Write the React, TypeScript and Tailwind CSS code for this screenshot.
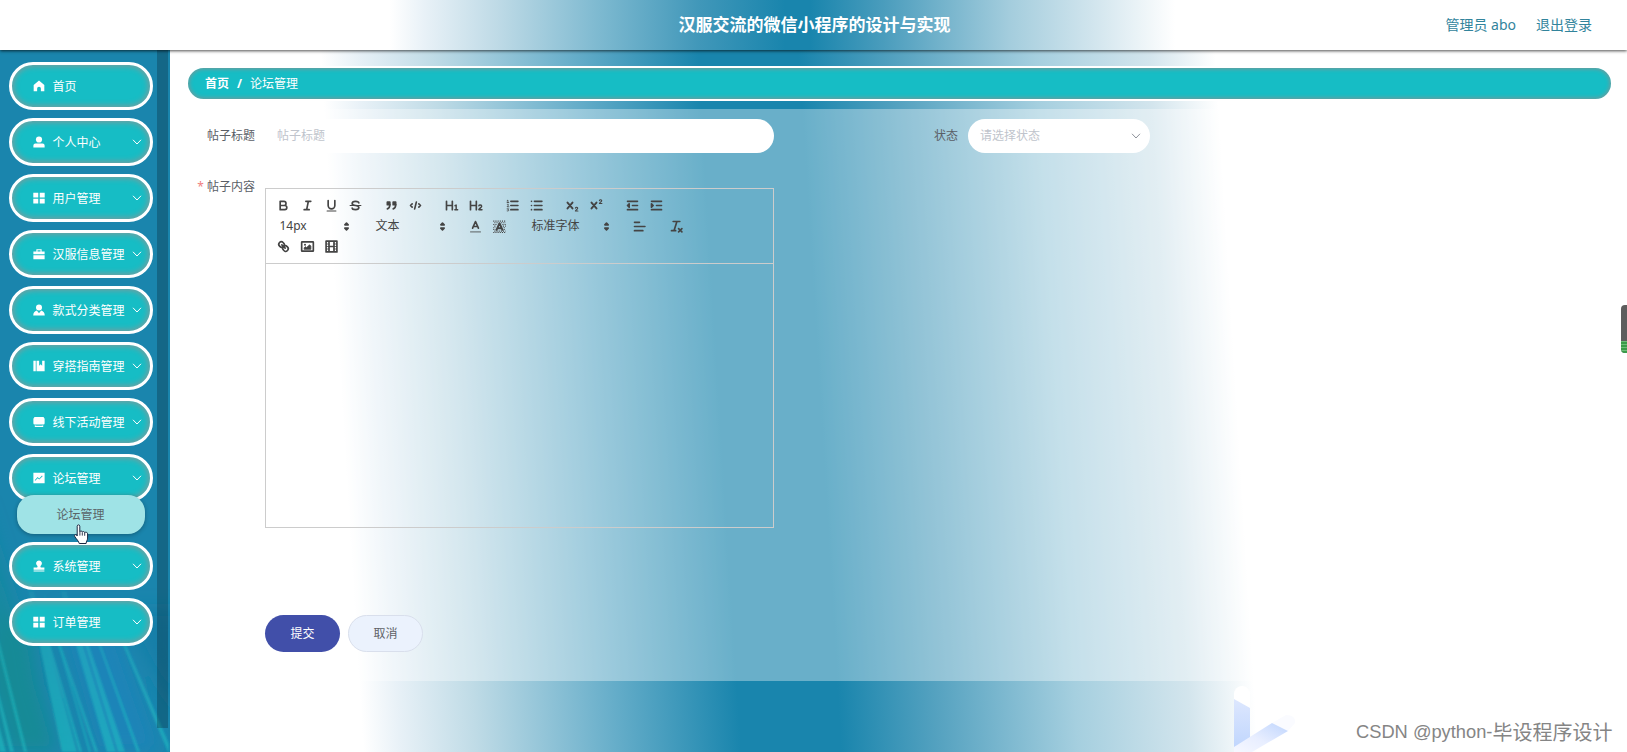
import type { ReactNode } from "react";
import clsx from "clsx";

type MenuItem = {
  label: string;
  icon: ReactNode;
  leaf?: boolean;
  children?: string[];
};

const menu: MenuItem[] = [
  {
    label: "首页",
    leaf: true,
    icon: <path d="M8 .8.9 6.800v8.200h4.600v-3.600a2.500 2.500 0 0 1 5 0v3.600h4.600V6.800z" />,
  },
  {
    label: "个人中心",
    icon: (
      <>
        <circle cx="8" cy="4.6" r="4.1" />
        <path d="M.5 15.2v-2.400a2.800 2.800 0 0 1 2.800-2.800h9.400a2.800 2.800 0 0 1 2.800 2.800v2.400z" />
      </>
    ),
  },
  { label: "用户管理", icon: <path d="M.4 1h6.6v6.2H.4zM9 1h6.6v6.2H9zM.4 9H7v6.200H.4zM9 9h6.600v6.200H9z" /> },
  {
    label: "汉服信息管理",
    icon: <path d="M4.5 1.500h7V4.500h4v3.700H.5V4.500h4zM6 2.900v1.600h4V2.900zM.5 9.800h15V15H.5z" fillRule="evenodd" />,
  },
  {
    label: "款式分类管理",
    icon: (
      <>
        <circle cx="8" cy="4.6" r="4" />
        <path d="M.3 15.3c.2-3.500 1.600-5.600 4.800-6.500L8 12.200l2.900-3.400c3.200.9 4.600 3 4.800 6.500z" />
      </>
    ),
  },
  { label: "穿搭指南管理", icon: <path d="M.5 1h3.200v14H.5zM4.700 1h3.500v6.500l2-1.700 2 1.700V1h3.300v14H4.700z" /> },
  {
    label: "线下活动管理",
    icon: <path d="M2 1.200h12l1.500 2.600v5.800a1.600 1.600 0 0 1-1.600 1.600H2.100A1.600 1.600 0 0 1 .5 9.600V3.800zM2.400 12.400c2 1 9.200 1 11.200 0v2.400H2.400z" />,
  },
  {
    label: "论坛管理",
    icon: <path d="M.5 1h15v14H.5zM3 11.600l3.200-3.400 2.200 1.900 4.400-4.600-.8-.8-3.700 3.900-2.200-1.900L2.300 11z" fillRule="evenodd" />,
    children: ["论坛管理"],
  },
  {
    label: "系统管理",
    icon: <path d="M8 .6a3.900 3.900 0 0 1 2.600 6.800c-.9 1-.9 2.400.2 2.600h4.400v3H.8v-3h4.400c1.100-.2 1.100-1.600.2-2.600A3.900 3.900 0 0 1 8 .6zM.8 14h14.400v1.400H.8z" />,
  },
  { label: "订单管理", icon: <path d="M.4 1h6.6v6.2H.4zM9 1h6.6v6.2H9zM.4 9H7v6.200H.4zM9 9h6.600v6.200H9z" /> },
];

function Chevron({ className }: { className?: string }) {
  return (
    <svg viewBox="0 0 10 10" className={clsx("size-[10px] fill-none stroke-current", className)}>
      <path d="M1 2.8 5 7l4-4.2" />
    </svg>
  );
}

function SidebarBackdrop() {
  return (
    <svg viewBox="0 0 170 702" preserveAspectRatio="none" className="absolute inset-0 size-full">
      <defs>
        <filter id="soft" x="-20%" y="-20%" width="140%" height="140%">
          <feGaussianBlur stdDeviation="1.1" />
        </filter>
        <filter id="wide" x="-40%" y="-40%" width="180%" height="180%">
          <feGaussianBlur stdDeviation="9" />
        </filter>
        <linearGradient id="fade" gradientUnits="userSpaceOnUse" x1="0" y1="520" x2="0" y2="702">
          <stop offset="0" stopColor="#22bfc4" stopOpacity="0" />
          <stop offset="0.4" stopColor="#22bfc4" stopOpacity="0.45" />
          <stop offset="1" stopColor="#22bfc4" stopOpacity="0.6" />
        </linearGradient>
      </defs>
      <rect width="170" height="702" fill="#1a85ad" />
      <g filter="url(#wide)">
        <path d="M-20 450 10 540 60 702H-20z" fill="#1489a0" />
        <path d="M0 560 30 580 50 702H20L-10 620z" fill="#128a96" />
        <path d="M60 560h50l50 142h-60z" fill="#1a84b8" />
        <path d="M120 560h60v110z" fill="#177fa8" />
      </g>
      <g filter="url(#soft)" fill="url(#fade)">
        <path d="M26 530h5l46 172H62z" />
        <path d="M38 560h2l42 142h-3z" />
        <path d="M60 540h6l50 162h-9z" />
        <path d="M74 560h3l48 142h-7z" />
        <path d="M50 570h2l46 132h-3z" />
        <path d="M44 545h1l46 157h-2z" />
        <path d="M86 560h2l52 142h-3z" />
        <path d="M108 560h3l58 134v10z" />
        <path d="M-4 590h3l28 112h-3z" />
        <path d="M-20 620h4l22 82H0z" />
        <path d="M-14 600h2l26 102h-4z" />
      </g>
    </svg>
  );
}

function Sidebar() {
  return (
    <aside className="relative flex w-[170px] shrink-0 overflow-hidden">
      <SidebarBackdrop />
      <nav className="relative flex w-[157px] flex-col gap-2 pt-3 pl-[8.5px]">
        {menu.map((item) => (
          <div key={item.label}>
            <div className="flex h-12 w-[144px] items-center rounded-full border-[3px] border-white bg-[#16bdc5] pr-[8px] pl-[21px] text-xs text-white shadow-[inset_0_0_6px_1px_#8a9696]">
              <svg viewBox="0 0 16 16" className="size-3 fill-current">
                {item.icon}
              </svg>
              <span className="mt-px ml-2 flex-1 whitespace-nowrap">{item.label}</span>
              {!item.leaf && <Chevron />}
            </div>
            {item.children?.map((child) => (
              <div
                key={child}
                className="relative -mt-[7px] ml-2 flex h-[39px] w-32 items-center justify-center rounded-[17px] bg-[#9fe3e6] text-xs text-[#5a6568] shadow-[0_1px_4px_rgba(0,0,0,0.3)]"
              >
                {child}
              </div>
            ))}
          </div>
        ))}
      </nav>
      <div className="relative h-[678px] w-[11px] bg-black/22" />
      {/* pointer resting on the open submenu entry */}
      <svg viewBox="0 0 16 21" className="absolute top-[474px] left-[73px] h-[21px] w-4">
        <path
          d="M4.200 2.200c0-1.800 2.600-1.800 2.600 0v5.600c.3-1.200 2.400-1.100 2.500.3.5-1 2.300-.7 2.400.6.6-.9 2.900-.5 2.900 1v4.400c0 2-1.300 3-1.500 5.400H6.200c-.3-2.200-2.800-4.300-4.400-6.900-1-1.700.8-2.700 1.900-1.400l.5.7z"
          fill="#fff"
          stroke="#1c2740"
          strokeWidth="1"
        />
        <path d="M6.900 8v3.600M9.300 8.400v3.200M11.700 9v2.800" stroke="#1c2740" strokeWidth=".9" />
      </svg>
    </aside>
  );
}

function Tool({ children }: { children: ReactNode }) {
  return (
    <span className="flex h-5 w-6 items-center justify-center">
      <svg viewBox="0 0 18 18" className="size-[15px] fill-none stroke-[#444] stroke-2 [stroke-linecap:round] [stroke-linejoin:round]">
        {children}
      </svg>
    </span>
  );
}

function Group({ children }: { children: ReactNode }) {
  return <span className="flex">{children}</span>;
}

function Picker({ label, className }: { label: string; className: string }) {
  return (
    <span className={clsx("flex h-5 items-center justify-between pr-[1.5px] pl-2 text-xs text-[#444]", className)}>
      {label}
      <svg viewBox="0 0 18 18" className="size-[15px] fill-[#444] stroke-[#444] stroke-2 [stroke-linejoin:round]">
        <path d="M7 11 9 13 11 11zM7 7 9 5 11 7z" />
      </svg>
    </span>
  );
}

const solid = "fill-[#444] stroke-none";

function Toolbar() {
  return (
    <div className="h-[76px] border border-[#ccc] py-[7px] pl-[5.5px]">
      <div className="-mt-px mb-px flex gap-[12.2px]">
        <Group>
          <Tool>
            <path d="M5 4h4.500a2.500 2.500 0 0 1 0 5H5zM5 9h5.500a2.500 2.500 0 0 1 0 5H5z" />
          </Tool>
          <Tool>
            <path d="M7 4h6M5 14h6M8 14l2-10" />
          </Tool>
          <Tool>
            <path d="M5 3v6a4 4 0 0 0 8 0V3" />
            <rect className={solid} x="3" y="15" width="12" height="1.200" rx=".5" />
          </Tool>
          <Tool>
            <path className="stroke-[1.2]" d="M15.500 9h-13" />
            <path d="M13 6c0-1.200-1.800-2-4-2S5 5 5 6.500 6.500 8.800 9 9s4 1 4 2.500S11.200 14 9 14s-4-.8-4-2" />
          </Tool>
        </Group>
        <Group>
          <Tool>
            <g className="fill-[#444]">
              <rect height="3" width="3" x="4" y="5" />
              <rect height="3" width="3" x="11" y="5" />
            </g>
            <path d="M7 8c0 4.031-3 5-3 5M14 8c0 4.031-3 5-3 5" />
          </Tool>
          <Tool>
            <path d="M5 7 3 9l2 2M13 7l2 2-2 2M10 5 8 13" />
          </Tool>
        </Group>
        <Group>
          <Tool>
            <path d="M3 4v10M10 4v10M3 9h7" />
            <path className="stroke-[1.7]" d="M13.200 9.200 14.600 8.400V14M13 14h3.400" />
          </Tool>
          <Tool>
            <path d="M3 4v10M10 4v10M3 9h7" />
            <path className="stroke-[1.7]" d="M13 9.400c.4-1.600 3.400-1.400 3.400.4 0 1.200-2.400 2.400-3.400 4.200h3.800" />
          </Tool>
        </Group>
        <Group>
          <Tool>
            <path d="M7 4h8.500M7 9h8.500M7 14h8.500" />
            <path className="stroke-1" d="M2.500 3.200 3.500 2.500v3M2.500 5.500h2M2.500 8c.6-1 2-.5 1.600.5L2.500 10.500h2.200M2.500 13h2l-1 1.200c1.600 0 1.300 1.800-.9 1.300" />
          </Tool>
          <Tool>
            <path d="M6.500 4h9M6.500 9h9M6.500 14h9M3 4h0M3 9h0M3 14h0" />
          </Tool>
        </Group>
        <Group>
          <Tool>
            <path className="stroke-[2.3]" d="m3 5.500 6 7M9 5.500l-6 7" />
            <path className="stroke-[1.3]" d="M12.500 12.200c.4-1.600 3-1.200 2.700.3-.2 1-2 1.800-2.700 3h3" />
          </Tool>
          <Tool>
            <path className="stroke-[2.3]" d="m3 5.500 6 7M9 5.500l-6 7" />
            <path className="stroke-[1.3]" d="M12.500 3.200c.4-1.600 3-1.200 2.700.3-.2 1-2 1.800-2.700 3h3" />
          </Tool>
        </Group>
        <Group>
          <Tool>
            <path d="M3 14h12M3 4h12M9 9h6" />
            <path className="fill-[#444]" d="M5 7v4L3 9z" />
          </Tool>
          <Tool>
            <path d="M3 14h12M3 4h12M9 9h6" />
            <path className="fill-[#444]" d="M3 7v4l2-2z" />
          </Tool>
        </Group>
      </div>
      <div className="flex gap-3">
        <Picker label="14px" className="w-[84px]" />
        <Picker label="文本" className="w-[84px]" />
        <Group>
          <Tool>
            <path className="stroke-1" d="M3 15.500h12" />
            <path d="M5.500 11 9 3l3.500 8M6.600 9h4.800" />
          </Tool>
          <Tool>
            <path
              className="stroke-[1.3] [stroke-dasharray:1.300_1.300] [stroke-linecap:butt]"
              d="M1.500 2.500h15M2.800 4.500h4.500M11 4.500h5.500M1.500 6.500h4.500M12.500 6.500h4M2.800 8.500h2.500M13 8.500h3.500M1.500 10.500h3M14 10.500h2.500M1.500 12.500h3M14 12.500h2.500M2.800 14.500h13.500M1.500 16.200h15"
            />
            <path className="stroke-[2.4]" d="M5.500 13 9 5l3.500 8M6.600 11h4.800" />
          </Tool>
        </Group>
        <Picker label="标准字体" className="w-[92px]" />
        <Group>
          <Tool>
            <path d="M3 9h12.500M3 14h10M3 4h6" />
          </Tool>
        </Group>
        <span className="flex pl-[1px]">
          <Tool>
            <path d="M5 3h8M6 14 9.500 3M3 14h5M11.500 11.500l4 4M15.500 11.500l-4 4" />
          </Tool>
        </span>
      </div>
      <Group>
        <Tool>
          <path d="m7 7 4 4" />
          <path d="M8.900 4.577a3.476 3.476 0 0 1 .36 4.679A3.476 3.476 0 0 1 4.577 8.900C3.185 7.500 2.035 6.400 4.217 4.217S7.500 3.185 8.900 4.577Z" />
          <path d="M13.423 9.100a3.476 3.476 0 0 0-4.679-.36 3.476 3.476 0 0 0 .36 4.679c1.392 1.392 2.500 2.542 4.679.36S14.815 10.500 13.423 9.100Z" />
        </Tool>
        <Tool>
          <rect x="2" y="3.500" width="14" height="11" rx=".5" />
          <circle className={solid} cx="6" cy="7" r="1.200" />
          <path className="fill-[#444] stroke-1" d="M5 12v-1.500l1.500-1.300L8 10.300 11.500 7 13 8.500V12z" />
        </Tool>
        <Tool>
          <path d="M2.500 2.500h13v13h-13zM6 3v12M12 3v12M6 9h6" />
          <path className="stroke-1" d="M3 6h3M3 9h3M3 12h3M12 6h3M12 9h3M12 12h3" />
        </Tool>
      </Group>
    </div>
  );
}

function Breadcrumb() {
  return (
    <div className="flex h-[35px] items-center rounded-[18px] border-2 border-white bg-[#16bdc5] pl-[17px] text-xs text-white shadow-[inset_0_0_4px_1px_#7c9696]">
      <b>首页</b>
      <b className="mx-2 w-[5px] text-center">/</b>
      <span>论坛管理</span>
    </div>
  );
}

function PostForm() {
  return (
    <section className="mt-2 h-[572px] bg-white/35 pt-2.5 text-xs text-[#5a5e66]">
      <div className="flex h-[34px] items-center">
        <label className="w-[79px] pr-2.5 text-right">帖子标题</label>
        <div className="flex h-full w-[509px] items-center rounded-[17px] bg-white pl-3 text-[#c0c4cc]">帖子标题</div>
        <label className="w-[194px] pr-2.5 text-right">状态</label>
        <div className="flex h-full w-[182px] items-center justify-between rounded-[17px] bg-white pr-[9px] pl-[12px] text-[#c0c4cc]">
          请选择状态
          <Chevron className="text-[#8f939b]" />
        </div>
      </div>

      <div className="mt-[35px] flex">
        <label className="-mt-[11px] w-[79px] pr-2.5 text-right leading-5">
          <span className="mr-[3px] text-[#f08080]">*</span>帖子内容
        </label>
        <div className="h-[340px] w-[509px]">
          <Toolbar />
          <div className="h-[264px] border border-t-0 border-[#ccc]" />
        </div>
      </div>

      <div className="mt-[87px] flex gap-2 pl-[79px]">
        <button className="h-[37px] w-[75px] rounded-full bg-[#414fa9] text-white">提交</button>
        <button className="h-[37px] w-[75px] rounded-full border border-[#d9dfec] bg-[#ebf2fd] text-[#606266]">取消</button>
      </div>
    </section>
  );
}

export default function App() {
  return (
    <div className="relative flex h-[752px] w-[1627px] flex-col overflow-hidden bg-white font-['Noto_Sans','Noto_Sans_CJK_SC',sans-serif]">
      <header className="relative z-10 flex h-[50px] shrink-0 items-center bg-[linear-gradient(90deg,#fff_390px,#e8f1f7_425px,#bedae6_498px,#7db9d0_600px,#4097b9_700px,#1985ad_785px,#1985ad_810px,#4b9dbd_885px,#a4cddd_1010px,#d5e7ef_1100px,#fff_1175px)] pr-[35px] shadow-[0_1px_3px_rgba(0,0,0,0.7)]">
        <div className="w-[350px]" />
        <h1 className="flex-1 pl-[2px] text-center text-[17px] font-bold text-white">汉服交流的微信小程序的设计与实现</h1>
        <div className="-mt-px flex w-[315px] justify-end gap-5 text-sm text-[#32849c]">
          <span>管理员 abo</span>
          <span>退出登录</span>
        </div>
      </header>

      <div className="flex flex-1">
        <Sidebar />
        <main className="flex-1 bg-[linear-gradient(86.500deg,#fff_193px,#e8f1f7_230px,#bfdbe6_306px,#65adc9_447px,#1985ad_570px,#1985ad_670px,#55a2c0_768px,#a5cfdf_906px,#d3e5ed_1020px,#fff_1086px)] px-4 pt-4 pr-[14px]">
          <Breadcrumb />
          <PostForm />
        </main>
      </div>

      {/* floating recorder badge in the corner */}
      <svg viewBox="0 0 64 66" className="absolute bottom-0 left-[1234px] h-[66px] w-16">
        <defs>
          <linearGradient id="stem" x1="0" y1="0" x2="0" y2="1">
            <stop offset="0" stopColor="#dde7fe" />
            <stop offset="1" stopColor="#c0d6fd" />
          </linearGradient>
          <linearGradient id="arm" x1="0" y1="1" x2="1" y2="0">
            <stop offset="0" stopColor="#f6f8ff" />
            <stop offset=".45" stopColor="#e8eeff" />
            <stop offset="1" stopColor="#bfd5fd" />
          </linearGradient>
        </defs>
        <path d="M0 8A8 8 0 0 1 16 8V66H0z" fill="#fff" />
        <path d="M0 13 16 22V52L0 62z" fill="url(#stem)" />
        <path d="M38 37 52 29q10 0 9 8L54 45z" fill="#fafbff" />
        <path d="M0 61 38 37l16 8L18 66H0z" fill="url(#arm)" />
      </svg>

      <div className="absolute top-[305px] right-0 flex h-12 w-1.5 flex-col justify-end overflow-hidden rounded-l bg-[#5d5d5d]">
        <div className="h-3 bg-[repeating-linear-gradient(0deg,#3b9b4a_0_2px,#6fbf79_2px_3px)]" />
      </div>

      <div className="absolute top-[717px] left-[1356px] flex items-center whitespace-nowrap text-[#858585] [text-shadow:-1px_-1px_0_#fff]">
        <span className="font-['Liberation_Sans',sans-serif] text-[18.300px] leading-[30px]">CSDN @python-</span>
        <span className="font-['Noto_Sans_CJK_SC',sans-serif] text-xl leading-[30px]">毕设程序设计</span>
      </div>
    </div>
  );
}
